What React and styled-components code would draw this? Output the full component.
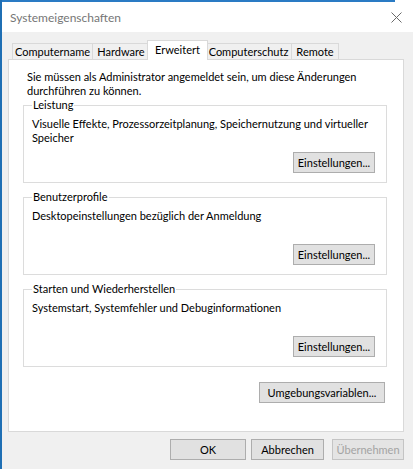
import React from 'react';
import styled, { createGlobalStyle } from 'styled-components';

const Global = createGlobalStyle`
  html, body { margin: 0; padding: 0; background: #f0f0f0; }
  body {
    font-family: Lato, "Liberation Sans", Arial, sans-serif;
    font-size: 11px;
    color: #000;
  }
`;

const Window = styled.div`
  width: 413px;
  height: 469px;
  box-sizing: border-box;
  border-left: 2px solid #1f6fb4;
  background: #f0f0f0;
  display: flex;
  flex-direction: column;
  overflow: hidden;
`;

const TitleBar = styled.div`
  height: 32px;
  box-sizing: border-box;
  flex: none;
  background: linear-gradient(#2a7bc4, #2a7bc4) top left / 393px 2px no-repeat, #fff;
  display: flex;
  align-items: center;
  justify-content: space-between;
  padding: 2px 11px 0 8px;
  color: #767676;
  font-size: 12px;
`;

const Body = styled.div`
  flex: 1;
  display: flex;
  flex-direction: column;
  padding: 8px 10px 0 6px;
`;

const TabRow = styled.div`
  display: flex;
  align-items: flex-end;
  margin-left: 4px;
  margin-bottom: -1px;
  height: 20px;
  position: relative;
  z-index: 1;
`;

const Tab = styled.div`
  box-sizing: border-box;
  width: ${p => (p.$active ? p.$w + 4 : p.$w)}px;
  height: ${p => (p.$active ? 20 : 17)}px;
  margin: ${p => (p.$active ? '0 -3px 0 -2px' : '0 -1px 0 0')};
  border: 1px solid #d9d9d9;
  border-bottom: ${p => (p.$active ? 'none' : '1px solid #d9d9d9')};
  background: ${p => (p.$active ? '#fff' : '#f0f0f0')};
  position: relative;
  z-index: ${p => (p.$active ? 2 : 1)};
  display: flex;
  align-items: center;
  justify-content: center;
  padding-bottom: ${p => (p.$active ? 3 : 0)}px;
  white-space: nowrap;
`;

const Panel = styled.div`
  box-sizing: border-box;
  width: 396px;
  height: 373px;
  border: 1px solid #d9d9d9;
  background: #fff;
  padding: 10px 16px 0 14px;
  display: flex;
  flex-direction: column;
`;

const Intro = styled.div`
  padding-left: 4px;
  line-height: 14px;
  white-space: nowrap;
`;

const Group = styled.fieldset`
  margin: ${p => (p.$first ? 0 : 7)}px 0 0 0;
  padding: 0 11px 9px 8px;
  border: 1px solid #dcdcdc;
  min-width: 0;
`;

const Legend = styled.legend`
  padding: 0 1px;
  line-height: 14px;
`;

const Desc = styled.div`
  margin-top: 5px;
  min-height: 28px;
  line-height: 14px;
`;

const ButtonRow = styled.div`
  display: flex;
  justify-content: flex-end;
  margin-top: ${p => p.$mt || 0}px;
  margin-right: ${p => p.$mr || 0}px;
`;

const Button = styled.button`
  box-sizing: border-box;
  width: ${p => p.$w}px;
  height: 21px;
  margin-left: ${p => p.$ml || 0}px;
  padding: 0;
  border: 1px solid ${p => (p.disabled ? '#c4c4c4' : '#adadad')};
  background: ${p => (p.disabled ? '#e4e4e4' : '#e1e1e1')};
  color: ${p => (p.disabled ? '#a3a3a3' : '#000')};
  font: inherit;
  white-space: nowrap;
`;

const Footer = styled.div`
  display: flex;
  justify-content: flex-end;
  margin-top: 7px;
  margin-right: -1px;
`;

const CloseIcon = () => (
  <svg width="11" height="11" viewBox="0 0 11 11">
    <path d="M0.5 0.5 L10.5 10.5 M10.5 0.5 L0.5 10.5" stroke="#6a6a6a" strokeWidth="1" fill="none" />
  </svg>
);

const tabs = [
  { label: 'Computername', w: 81 },
  { label: 'Hardware', w: 58 },
  { label: 'Erweitert', w: 57, active: true },
  { label: 'Computerschutz', w: 87 },
  { label: 'Remote', w: 48 },
];

const groups = [
  {
    title: 'Leistung',
    text: 'Visuelle Effekte, Prozessorzeitplanung, Speichernutzung und virtueller Speicher',
  },
  { title: 'Benutzerprofile', text: 'Desktopeinstellungen bezüglich der Anmeldung' },
  { title: 'Starten und Wiederherstellen', text: 'Systemstart, Systemfehler und Debuginformationen' },
];

export default function App() {
  return (
    <>
      <Global />
      <Window>
        <TitleBar>
          <span>Systemeigenschaften</span>
          <CloseIcon />
        </TitleBar>
        <Body>
          <TabRow>
            {tabs.map(t => (
              <Tab key={t.label} $w={t.w} $active={t.active}>
                {t.label}
              </Tab>
            ))}
          </TabRow>
          <Panel>
            <Intro>
              Sie müssen als Administrator angemeldet sein, um diese Änderungen
              <br />
              durchführen zu können.
            </Intro>
            {groups.map((g, i) => (
              <Group key={g.title} $first={i === 0}>
                <Legend>{g.title}</Legend>
                <Desc>{g.text}</Desc>
                <ButtonRow $mt={7}>
                  <Button $w={82}>Einstellungen...</Button>
                </ButtonRow>
              </Group>
            ))}
            <ButtonRow $mt={15} $mr={2}>
              <Button $w={126}>Umgebungsvariablen...</Button>
            </ButtonRow>
          </Panel>
          <Footer>
            <Button $w={76}>OK</Button>
            <Button $w={73} $ml={5}>Abbrechen</Button>
            <Button $w={72} $ml={8} disabled>Übernehmen</Button>
          </Footer>
        </Body>
      </Window>
    </>
  );
}
